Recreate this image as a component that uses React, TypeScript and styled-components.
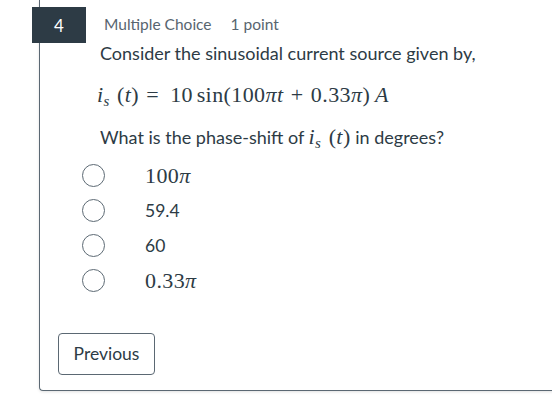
import React from 'react';
import styled, { createGlobalStyle } from 'styled-components';

const GlobalStyle = createGlobalStyle`
  html, body {
    margin: 0;
    padding: 0;
    background: #ffffff;
    overflow: hidden;
  }
  body {
    font-family: Lato, "Open Sans", sans-serif;
    color: #2d3b45;
  }
`;

const Page = styled.div`
  width: 552px;
  height: 404px;
  overflow: hidden;
`;

const Card = styled.div`
  position: relative;
  box-sizing: border-box;
  margin-left: 39px;
  width: 540px;
  height: 391px;
  border-left: 1px solid #5b6873;
  border-bottom: 1px solid #5b6873;
  border-bottom-left-radius: 4px;
  box-shadow: 0 1px 3px rgba(0, 0, 0, 0.12);
  padding: 14px 0 0 18px;
  display: flex;
  flex-direction: column;
`;

const Badge = styled.div`
  position: absolute;
  top: 7px;
  left: -8px;
  width: 54px;
  height: 36px;
  background: #2d3b45;
  color: #ffffff;
  font-size: 17px;
  display: flex;
  align-items: center;
  justify-content: center;
`;

const Body = styled.div`
  margin-left: 42px;
  display: flex;
  flex-direction: column;
`;

const Header = styled.div`
  margin-left: 4px;
  font-size: 15.5px;
  line-height: 20px;
  color: #58656f;
  display: flex;
  gap: 19px;
`;

const Text = styled.div<{ $top: number }>`
  margin-top: ${({ $top }) => $top}px;
  font-size: 18px;
  line-height: 26px;
  color: #2d3b45;
`;

const MathLine = styled.div`
  margin-top: 14px;
  margin-left: -3px;
  height: 30px;
  display: flex;
  align-items: center;
`;

const M = styled.span`
  font-family: "Liberation Serif", "DejaVu Serif", serif;
  font-size: 22px;
  color: #2d3b45;
  white-space: pre;
  letter-spacing: 0.4px;
`;

const MI = styled.i`
  font-style: italic;
`;

const Sub = styled.sub`
  font-size: 0.68em;
  font-style: italic;
  vertical-align: -0.3em;
  line-height: 0;
`;

/* spacing in 18ths of an em, as in TeX */
const Sp = styled.span<{ $w: number }>`
  display: inline-block;
  width: ${({ $w }) => ($w / 18).toFixed(3)}em;
`;

const Options = styled.div`
  margin-top: 8px;
  margin-left: -18px;
  display: flex;
  flex-direction: column;
`;

const Option = styled.label`
  height: 35px;
  display: flex;
  align-items: center;
`;

const Radio = styled.span`
  box-sizing: border-box;
  width: 23px;
  height: 23px;
  border: 1.3px solid #5d6a74;
  border-radius: 50%;
  flex-shrink: 0;
`;

const OptionText = styled.span<{ $math?: boolean }>`
  margin-left: 40px;
  font-size: ${({ $math }) => ($math ? '22px' : '17.5px')};
  font-family: ${({ $math }) =>
    $math ? '"Liberation Serif", "DejaVu Serif", serif' : 'Lato, "Open Sans", sans-serif'};
  letter-spacing: ${({ $math }) => ($math ? '0.4px' : '0')};
  color: #2d3b45;
`;

const Footer = styled.div`
  margin-top: 35px;
`;

const Button = styled.button`
  box-sizing: border-box;
  width: 97px;
  height: 42px;
  background: #ffffff;
  border: 1px solid #5b6873;
  border-radius: 4px;
  font-family: Lato, "Open Sans", sans-serif;
  font-size: 17.5px;
  color: #2d3b45;
  padding: 0 0 2px;
  cursor: pointer;
`;

const IsT = () => (
  <M>
    <MI>i</MI>
    <Sub>s</Sub>
    <Sp $w={6} />(<MI>t</MI>)
  </M>
);

const options = [
  { label: '100', math: true },
  { label: '59.4', math: false },
  { label: '60', math: false },
  { label: '0.33', math: true },
];

const App: React.FC = () => {
  return (
    <Page>
      <GlobalStyle />
      <Card>
        <Badge>4</Badge>
        <Body>
          <Header>
            <span>Multiple Choice</span>
            <span>1 point</span>
          </Header>
          <Text $top={6}>Consider the sinusoidal current source given by,</Text>
          <MathLine>
            <IsT />
            <M>
              <Sp $w={6} />=<Sp $w={9} />10<Sp $w={3} />sin(100<MI>πt</MI>
              <Sp $w={6} />+<Sp $w={6} />0.33<MI>π</MI>)<Sp $w={4} />
              <MI>A</MI>
            </M>
          </MathLine>
          <Text $top={14}>
            What is the phase-shift of <IsT /> in degrees?
          </Text>
          <Options>
            {options.map((o, i) => (
              <Option key={i}>
                <Radio />
                <OptionText $math={o.math}>
                  {o.label}
                  {o.math && <MI>π</MI>}
                </OptionText>
              </Option>
            ))}
          </Options>
        </Body>
        <Footer>
          <Button>Previous</Button>
        </Footer>
      </Card>
    </Page>
  );
};

export default App;
